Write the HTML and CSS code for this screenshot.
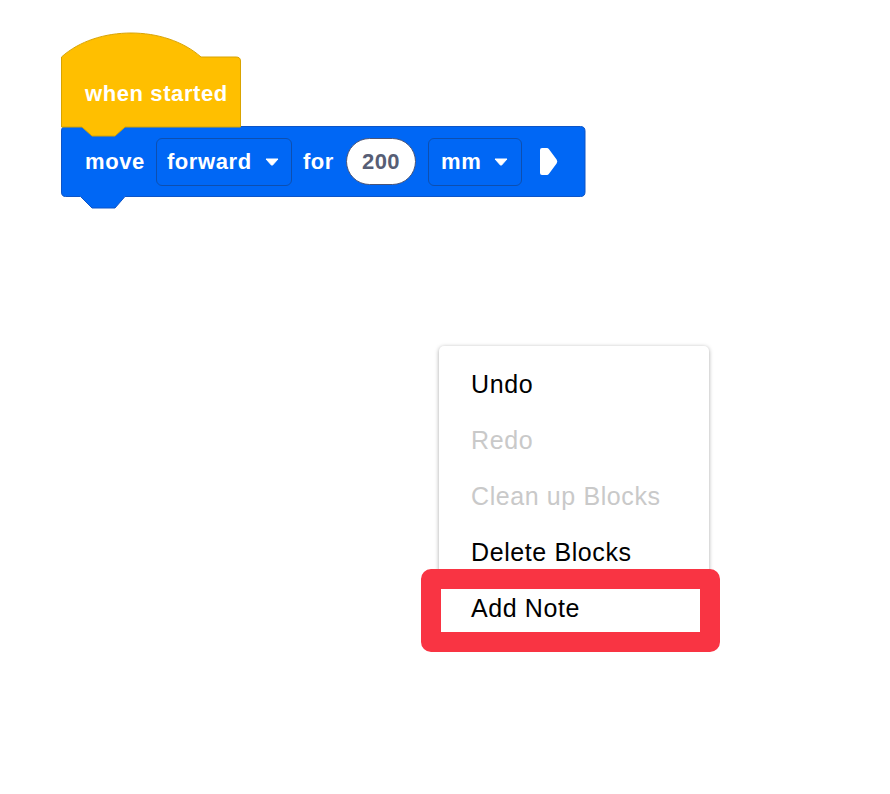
FILE: index.html
```html
<!DOCTYPE html>
<html lang="en">
<head>
    <meta charset="UTF-8">
    <meta name="viewport" content="width=device-width, initial-scale=1.0">
    <title>Workspace</title>
    <link rel="stylesheet" href="styles.css">
</head>
<body>
    <div class="workspace">
        <!-- Block script -->
        <div class="script">
            <div class="hat">
                <svg class="shape" width="182" height="106" viewBox="0 0 182 106">
                    <path d="M0.5,25 C36,-7 104,-7 140,25 H175 Q179.5,25 179.5,29 V95 H64 L54,104 H31 L21,95 H0.5 Z"
                          fill="#ffbf00" stroke="#d9a300" stroke-width="1"/>
                </svg>
                <span class="hat-label">when started</span>
            </div>

            <div class="block">
                <svg class="shape" width="526" height="86" viewBox="0 0 526 86">
                    <path d="M4.5,0.5 H519.5 Q524,0.5 524,5 V66 Q524,70.5 519.5,70.5 H64 L54,82 H31 L19.5,70.5 H4.5 Q0.5,70.5 0.5,66 V5 Q0.5,0.5 4.5,0.5 Z"
                          fill="#0067f5" stroke="#0d55c7" stroke-width="1"/>
                </svg>
                <div class="block-row">
                    <span class="label">move</span>
                    <div class="dropdown dropdown-dir">
                        <span>forward</span>
                        <svg width="14" height="8" viewBox="0 0 14 8"><path d="M1,1 H13 L7.6,7 Q7,7.6 6.4,7 Z" fill="#fff" stroke="#fff" stroke-linejoin="round"/></svg>
                    </div>
                    <span class="label">for</span>
                    <div class="number">200</div>
                    <div class="dropdown dropdown-unit">
                        <span>mm</span>
                        <svg width="14" height="8" viewBox="0 0 14 8"><path d="M1,1 H13 L7.6,7 Q7,7.6 6.4,7 Z" fill="#fff" stroke="#fff" stroke-linejoin="round"/></svg>
                    </div>
                    <svg class="expand" width="20" height="30" viewBox="0 0 20 30">
                        <path d="M3,1 H8 Q9,1 10,2.2 L17.6,12.6 Q19,14.5 17.6,16.4 L10,26.8 Q9,28 8,28 H3 Q1,28 1,26 V3 Q1,1 3,1 Z" fill="#fff"/>
                    </svg>
                </div>
            </div>
        </div>

        <!-- Context menu -->
        <div class="context-menu">
            <div class="menu-item">Undo</div>
            <div class="menu-item disabled">Redo</div>
            <div class="menu-item disabled">Clean up Blocks</div>
            <div class="menu-item">Delete Blocks</div>
            <div class="menu-item">Add Note</div>
        </div>

        <!-- Highlight around "Add Note" -->
        <div class="highlight"></div>
    </div>
</body>
</html>
```

FILE: styles.css
```css
body {
    margin: 0;
    background-color: #fff;
    font-family: "Liberation Sans", Arial, sans-serif;
}

.workspace {
    position: relative;
    width: 890px;
    height: 794px;
    overflow: hidden;
}

/* Blocks sit on a free canvas */
.script {
    position: absolute;
    left: 61px;
    top: 32px;
}

.shape {
    position: absolute;
    left: 0;
    top: 0;
    overflow: visible;
}

/* Hat block */
.hat {
    position: relative;
    z-index: 2;
    width: 182px;
    height: 95px;
}

.hat-label {
    position: relative;
    display: block;
    padding: 49px 0 0 24px;
    color: #fff;
    font-size: 22px;
    font-weight: bold;
    line-height: 26px;
    letter-spacing: 0.6px;
}

/* Move block */
.block {
    position: relative;
    z-index: 1;
    width: 526px;
    height: 71px;
    margin-top: -1px;
}

.block-row {
    position: relative;
    display: flex;
    align-items: center;
    gap: 11px;
    height: 71px;
    padding-left: 24px;
}

.label {
    color: #fff;
    font-size: 22px;
    font-weight: bold;
    letter-spacing: 0.6px;
}

.dropdown {
    box-sizing: border-box;
    display: flex;
    align-items: center;
    justify-content: space-between;
    height: 48px;
    padding: 0 12px 0 10px;
    border: 1px solid #0d4fb0;
    border-radius: 6px;
    color: #fff;
    font-size: 22px;
    font-weight: bold;
    letter-spacing: 0.6px;
}

.dropdown-dir {
    width: 136px;
}

.dropdown-unit {
    width: 94px;
    margin-left: 1px;
    padding-left: 12px;
    padding-right: 13px;
}

.number {
    box-sizing: border-box;
    width: 70px;
    height: 47px;
    margin-left: 1px;
    display: flex;
    align-items: center;
    justify-content: center;
    background-color: #fff;
    border: 1px solid #4a5578;
    border-radius: 24px;
    color: #575e75;
    font-size: 22px;
    font-weight: bold;
    letter-spacing: 0.4px;
}

.expand {
    margin-left: 6px;
}

/* Context menu */
.context-menu {
    position: absolute;
    left: 439px;
    top: 346px;
    width: 270px;
    padding: 10px 0;
    background-color: #fff;
    border-radius: 5px;
    box-shadow: 0 1px 4px rgba(0, 0, 0, 0.35);
}

.menu-item {
    height: 56px;
    line-height: 56px;
    padding-left: 32px;
    font-size: 25px;
    letter-spacing: 0.6px;
    color: #000;
}

.menu-item.disabled {
    color: #c9c9c9;
}

/* Red annotation frame */
.highlight {
    position: absolute;
    left: 421px;
    top: 569px;
    width: 259px;
    height: 43px;
    border: 20px solid #f93443;
    border-radius: 10px;
}
```
